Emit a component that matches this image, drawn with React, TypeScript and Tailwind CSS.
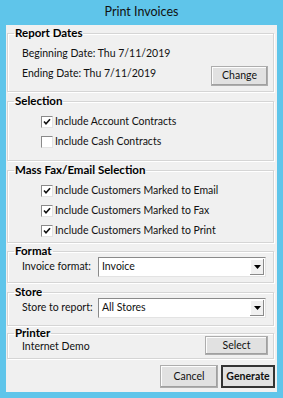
import type { ReactNode } from "react"

const font = { fontFamily: "Lato, 'Liberation Sans', sans-serif" }

function GroupBox({
  title,
  className,
  children,
}: {
  title: string
  className: string
  children: ReactNode
}) {
  return (
    <fieldset
      className={`ml-[1px] mr-[3px] border border-[#d5d5d5] px-[7px] shadow-[inset_1px_1px_0_#fff,1px_1px_0_#fff] ${className}`}
    >
      <legend className="-ml-[1px] px-[1px] text-[11.5px] leading-[16px] font-bold text-black">
        {title}
      </legend>
      {children}
    </fieldset>
  )
}

function Button({ label, className, primary }: { label: string; className: string; primary?: boolean }) {
  return (
    <button
      className={`flex items-center justify-center bg-[#e1e1e1] text-[10.5px] text-[#111] ${
        primary
          ? "border-2 border-[#333] font-bold"
          : "border border-[#adadad] shadow-[inset_-1px_-1px_0_#a0a0a0,inset_1px_1px_0_#fdfdfd]"
      } ${className}`}
    >
      {label}
    </button>
  )
}

function Checkbox({ label, checked }: { label: string; checked?: boolean }) {
  return (
    <div className="flex h-[20px] items-center pl-[26px]">
      <span className="flex h-[12px] w-[12px] items-center justify-center border border-t-[#8a8a8a] border-l-[#8a8a8a] border-r-[#e3e3e3] border-b-[#e3e3e3] bg-white">
        {checked && (
          <svg width="8" height="8" viewBox="0 0 8 8">
            <path d="M1 3.5 L3 5.8 L7 1.2" fill="none" stroke="#111" strokeWidth="1.6" />
          </svg>
        )}
      </span>
      <span className="ml-[2px] text-[10.5px] text-[#111]">{label}</span>
    </div>
  )
}

function Combo({ value }: { value: string }) {
  return (
    <div className="flex h-[20px] w-[168px] items-center border border-t-[#8a8a8a] border-l-[#8a8a8a] border-r-[#e3e3e3] border-b-[#e3e3e3] bg-white">
      <span className="flex-1 pl-[3px] text-[10.5px] text-[#111]">{value}</span>
      <span className="mr-[1px] flex h-[16px] w-[14px] items-center justify-center bg-[#f0f0f0] shadow-[inset_-1px_-1px_0_#8a8a8a,inset_1px_1px_0_#fff]">
        <svg width="7" height="4" viewBox="0 0 7 4">
          <path d="M0 0 H7 L3.5 4 Z" fill="#000" />
        </svg>
      </span>
    </div>
  )
}

export default function App() {
  return (
    <div className="flex h-[398px] w-[283px] flex-col bg-[#5fc5ea]" style={font}>
      <div className="flex h-[25px] items-center justify-center text-[12.5px] text-[#111]">Print Invoices</div>

      <div className="mx-[6px] mb-[6px] flex flex-1 flex-col bg-[#f0f0f0]">
        <GroupBox title="Report Dates" className="h-[67px]">
          <div className="-mr-[2px] flex flex-col pl-[7px] text-[10.5px] text-[#111]">
            <div className="mt-[4px] leading-[16px]">Beginning Date: Thu 7/11/2019</div>
            <div className="mt-[4px] flex items-start justify-between">
              <span className="leading-[16px]">Ending Date: Thu 7/11/2019</span>
              <Button label="Change" className="mt-[1px] h-[20px] w-[57px]" />
            </div>
          </div>
        </GroupBox>

        <GroupBox title="Selection" className="mt-[1px] h-[68px]">
          <div className="mt-[3px] flex flex-col">
            <Checkbox label="Include Account Contracts" checked />
            <Checkbox label="Include Cash Contracts" />
          </div>
        </GroupBox>

        <GroupBox title="Mass Fax/Email Selection" className="mt-[1px] h-[81px]">
          <div className="mt-[3px] flex flex-col">
            <Checkbox label="Include Customers Marked to Email" checked />
            <Checkbox label="Include Customers Marked to Fax" checked />
            <Checkbox label="Include Customers Marked to Print" checked />
          </div>
        </GroupBox>

        <GroupBox title="Format" className="h-[40px]">
          <div className="-mt-[2px] flex items-center pl-[7px]">
            <span className="w-[76px] text-[10.5px] text-[#111]">Invoice format:</span>
            <Combo value="Invoice" />
          </div>
        </GroupBox>

        <GroupBox title="Store" className="mt-[1px] h-[42px]">
          <div className="-mt-[2px] flex items-center pl-[7px]">
            <span className="w-[76px] text-[10.5px] text-[#111]">Store to report:</span>
            <Combo value="All Stores" />
          </div>
        </GroupBox>

        <GroupBox title="Printer" className="-mt-[1px] h-[34px]">
          <div className="-mr-[2px] -mt-[5px] flex items-center justify-between pl-[7px]">
            <span className="text-[10.5px] leading-[16px] text-[#111]">Internet Demo</span>
            <Button label="Select" className="h-[19px] w-[63px]" />
          </div>
        </GroupBox>

        <div className="mt-[6px] flex justify-end gap-[3px] pr-[2px]">
          <Button label="Cancel" className="h-[23px] w-[58px]" />
          <Button label="Generate" primary className="h-[23px] w-[54px]" />
        </div>
      </div>
    </div>
  )
}
